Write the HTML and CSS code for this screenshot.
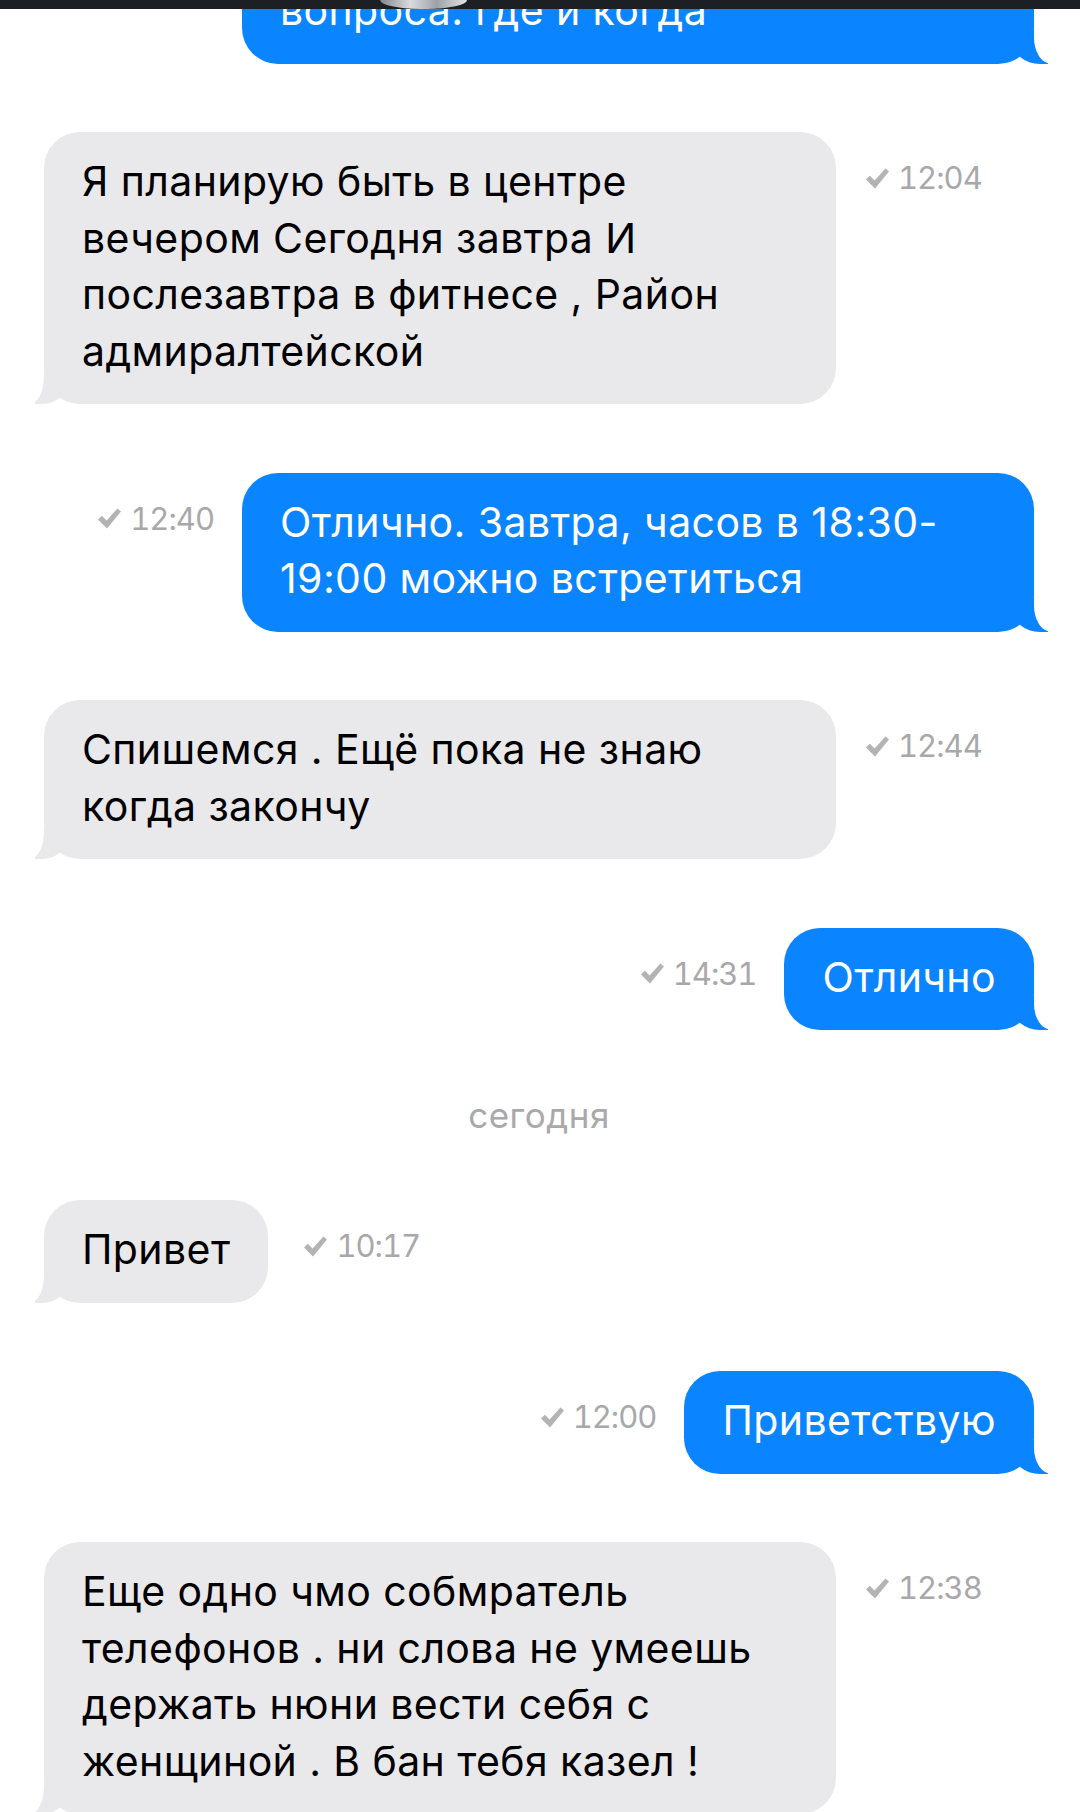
FILE: index.html
```html
<!DOCTYPE html>
<html lang="ru">
<head>
    <meta charset="UTF-8">
    <title>Сообщения</title>
    <link rel="stylesheet" href="styles.css">
</head>
<body>
    <div class="topbar">
        <div class="topbar-avatar"></div>
    </div>

    <div class="chat">
        <div class="row out">
            <div class="bubble full">вопроса. где и когда</div>
        </div>

        <div class="row in">
            <div class="bubble">Я планирую быть в центре вечером Сегодня завтра И послезавтра в фитнесе , Район адмиралтейской</div>
            <div class="time"><svg class="check" viewBox="0 0 23 21"><path d="M0 11.5 L3.8 7.8 L8.6 12.6 L19.4 0.5 L23 3.6 L9 20.5 Z"/></svg>12:04</div>
        </div>

        <div class="row out">
            <div class="time"><svg class="check" viewBox="0 0 23 21"><path d="M0 11.5 L3.8 7.8 L8.6 12.6 L19.4 0.5 L23 3.6 L9 20.5 Z"/></svg>12:40</div>
            <div class="bubble">Отлично. Завтра, часов в 18:30-19:00 можно встретиться</div>
        </div>

        <div class="row in">
            <div class="bubble">Спишемся . Ещё пока не знаю когда закончу</div>
            <div class="time"><svg class="check" viewBox="0 0 23 21"><path d="M0 11.5 L3.8 7.8 L8.6 12.6 L19.4 0.5 L23 3.6 L9 20.5 Z"/></svg>12:44</div>
        </div>

        <div class="row out">
            <div class="time"><svg class="check" viewBox="0 0 23 21"><path d="M0 11.5 L3.8 7.8 L8.6 12.6 L19.4 0.5 L23 3.6 L9 20.5 Z"/></svg>14:31</div>
            <div class="bubble">Отлично</div>
        </div>

        <div class="date">сегодня</div>

        <div class="row in">
            <div class="bubble">Привет</div>
            <div class="time short"><svg class="check" viewBox="0 0 23 21"><path d="M0 11.5 L3.8 7.8 L8.6 12.6 L19.4 0.5 L23 3.6 L9 20.5 Z"/></svg>10:17</div>
        </div>

        <div class="row out">
            <div class="time"><svg class="check" viewBox="0 0 23 21"><path d="M0 11.5 L3.8 7.8 L8.6 12.6 L19.4 0.5 L23 3.6 L9 20.5 Z"/></svg>12:00</div>
            <div class="bubble">Приветствую</div>
        </div>

        <div class="row in">
            <div class="bubble">Еще одно чмо собмратель телефонов . ни слова не умеешь держать нюни вести себя с женщиной . В бан тебя казел !</div>
            <div class="time"><svg class="check" viewBox="0 0 23 21"><path d="M0 11.5 L3.8 7.8 L8.6 12.6 L19.4 0.5 L23 3.6 L9 20.5 Z"/></svg>12:38</div>
        </div>
    </div>
</body>
</html>
```

FILE: styles.css
```css
body {
    margin: 0;
    background-color: #fff;
    font-family: Inter, "Noto Sans", sans-serif;
}
/* тёмная полоска сверху, лежит поверх первого сообщения */
.topbar {
    position: fixed;
    top: 0;
    left: 0;
    right: 0;
    height: 9px;
    background-color: #1c1f24;
    z-index: 2;
}
.topbar-avatar {
    position: absolute;
    left: 380px;
    top: 0;
    width: 87px;
    height: 9px;
    border-radius: 0 0 40px 40px / 0 0 9px 9px;
    background: linear-gradient(90deg, #83878c, #d9dbde 35%, #9ea2a7 65%, #e2e4e6);
}
.chat {
    display: flex;
    flex-direction: column;
    gap: 68.5px;
    margin-top: -39px;
    padding: 0 46px 0 44px;
}
.row {
    display: flex;
    align-items: flex-start;
}
.row.in {
    justify-content: flex-start;
    gap: 30px;
}
.row.out {
    justify-content: flex-end;
    gap: 28px;
}
.bubble {
    position: relative;
    box-sizing: border-box;
    max-width: 792px;
    padding: 21px 38px 25px;
    border-radius: 36px;
    font-size: 41px;
    line-height: 56.5px;
    letter-spacing: 0.4px;
}
/* начало сообщения обрезано сверху, пузырь во всю ширину */
.bubble.full {
    width: 792px;
}
.in .bubble {
    background-color: #e9e9eb;
    color: #000;
}
.out .bubble {
    background-color: #0a84ff;
    color: #fff;
}
/* хвостики пузырей */
.bubble::before,
.bubble::after {
    content: "";
    position: absolute;
    bottom: 0;
}
.out .bubble::before {
    right: -14px;
    width: 36px;
    height: 34px;
    background-color: #0a84ff;
    border-bottom-left-radius: 28px 24px;
}
.out .bubble::after {
    right: -40px;
    width: 40px;
    height: 36px;
    background-color: #fff;
    border-bottom-left-radius: 18px 26px;
}
.in .bubble::before {
    left: -9px;
    width: 32px;
    height: 32px;
    background-color: #e9e9eb;
    border-bottom-right-radius: 24px 22px;
}
.in .bubble::after {
    left: -36px;
    width: 36px;
    height: 34px;
    background-color: #fff;
    border-bottom-right-radius: 14px 28px;
}
.time {
    display: flex;
    align-items: center;
    gap: 9px;
    margin-top: 26px;
    font-size: 31px;
    line-height: 40px;
    letter-spacing: -1px;
    color: #a8a8ab;
    white-space: nowrap;
    font-variant-numeric: tabular-nums;
}
.time.short {
    margin-left: 6px;
}
.check {
    width: 23px;
    height: 21px;
    fill: #b3b3b6;
}
.date {
    text-align: center;
    font-size: 35px;
    line-height: 33px;
    letter-spacing: 0.5px;
    color: #a9a9ac;
}
```
